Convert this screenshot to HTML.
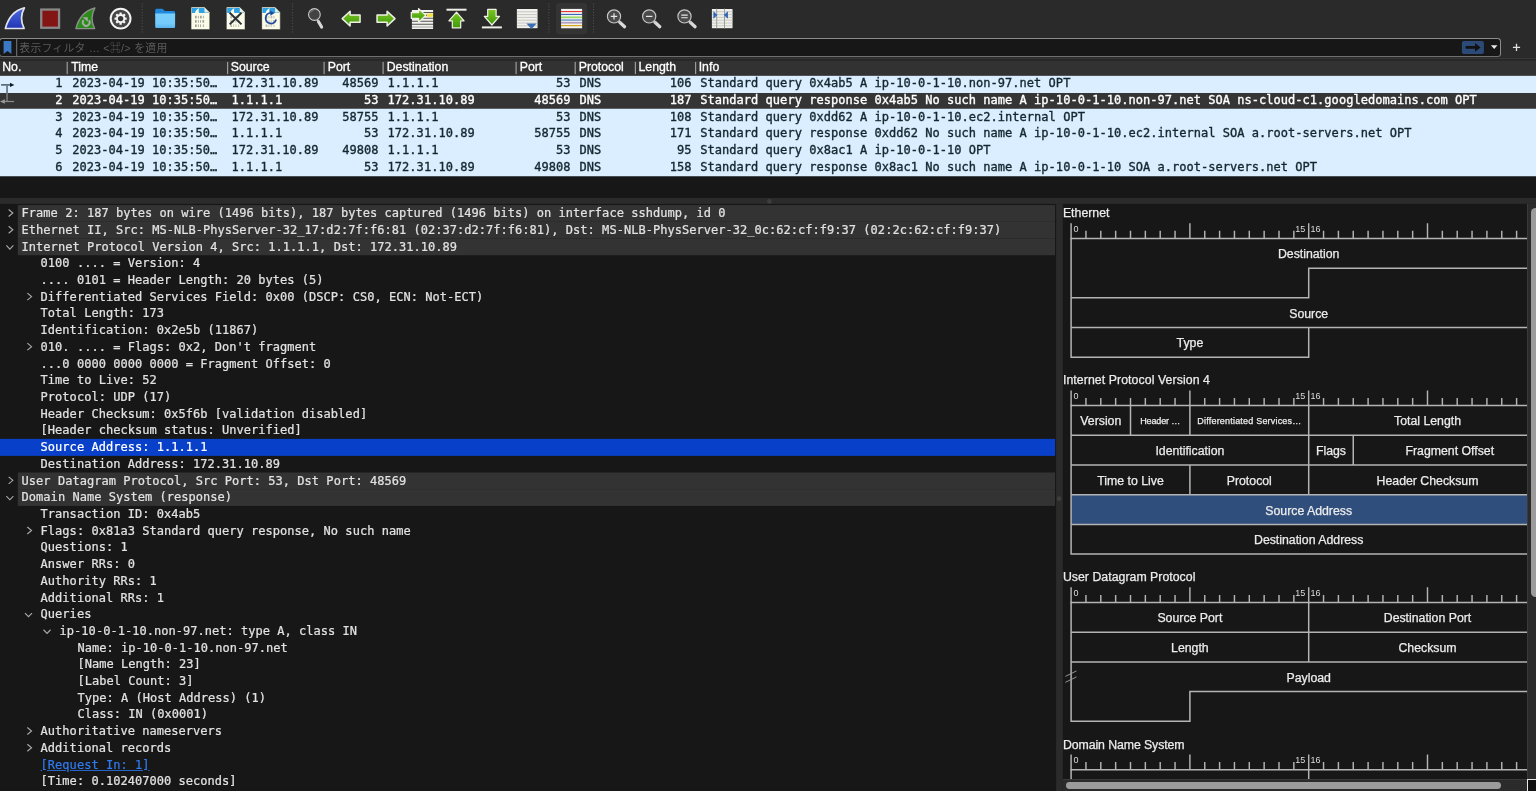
<!DOCTYPE html>
<html lang="ja"><head><meta charset="utf-8"><title>Wireshark</title><style>
*{box-sizing:border-box}
html,body{margin:0;padding:0}
body{width:1536px;height:791px;overflow:hidden;background:#171717;position:relative;font-family:"Liberation Sans","Noto Sans CJK JP",sans-serif;font-size:12px;color:#e4e4e4}
#all{position:absolute;left:0;top:0;width:1536px;height:791px;will-change:transform}
#tb{position:absolute;left:0;top:0;width:1536px;height:38px;background:#2a2a2a}
#fb{position:absolute;left:0;top:38px;width:1536px;height:23px;background:#2a2a2a}
#fin{position:absolute;left:-0.9px;top:0;width:1502.3px;height:18.7px;border:1.1px solid #8c8c8c;border-bottom-color:#707070;border-radius:3.5px;background:#171717}
#ph{position:absolute;left:19.3px;top:2px;font-size:10.8px;letter-spacing:0.3px;line-height:17px;color:#5a5a5a;white-space:pre}
#hd{position:absolute;left:0;top:60px;width:1536px;height:16px;color:#fff;font-size:12.3px}
#hd span{-webkit-text-stroke:0.3px #fff;position:absolute;top:-1px;margin-left:-0.8px;line-height:17px;white-space:pre}
#hd i{position:absolute;top:2px;width:1px;height:12px;background:#9a9a9a}
.pr{position:absolute;left:0;width:1536px;height:17px;color:#12272e;font-family:"DejaVu Sans Mono","Liberation Mono",monospace;font-size:12px;letter-spacing:0.032px}
.pr.sel{color:#fff}
.pr span{-webkit-text-stroke:0.35px currentColor;position:absolute;top:0;line-height:17px;white-space:pre}
.pr span.r{text-align:right}
#tree{position:absolute;left:0;top:0;width:1055px;height:791px;overflow:hidden;font-family:"DejaVu Sans Mono","Liberation Mono",monospace;font-size:12px;letter-spacing:0.032px;color:#e2e2e2}
.tr{position:absolute;left:0;width:1055px;height:17px}
.bg{position:absolute;left:17.8px;width:1037.2px;background:#333333}
.bgs{position:absolute;left:0;width:1055px;background:#0840c9}
.tr.sel span{color:#fff}
.tr span{-webkit-text-stroke:0.22px currentColor;position:absolute;top:0;line-height:17px;white-space:pre;font-weight:normal}
.tr svg{position:absolute;top:0}
.lnk{color:#2f7bf0;text-decoration:underline;text-underline-offset:0.9px;text-decoration-thickness:0.8px;text-decoration-color:#2566c8}
#dg{position:absolute;left:1063px;top:204px;width:464px;height:575px;overflow:hidden;background:#171717}
</style></head><body>
<div id="all">
<div id="tb"><svg width="1536" height="38" viewBox="0 0 1536 38" style="position:absolute;left:0;top:0">
<defs>
<linearGradient id="gb" x1="0" y1="0" x2="0" y2="1"><stop offset="0" stop-color="#4a6be0"/><stop offset="1" stop-color="#2234b4"/></linearGradient>
<linearGradient id="gg" x1="0" y1="0" x2="0" y2="1"><stop offset="0" stop-color="#7ac522"/><stop offset="1" stop-color="#3f9a08"/></linearGradient>
<linearGradient id="gf" x1="0" y1="0" x2="0" y2="1"><stop offset="0" stop-color="#7ad0fc"/><stop offset="0.7" stop-color="#74cbfa"/><stop offset="1" stop-color="#58b4ee"/></linearGradient>
<linearGradient id="gh" x1="0" y1="0" x2="1" y2="1"><stop offset="0" stop-color="#f4f4f4"/><stop offset="1" stop-color="#c4c4c4"/></linearGradient>
</defs>
<!-- start capture (blue fin) -->
<path d="M5.4 28.5C8 18.4 14.4 10.4 24.4 7.9C20.8 14.4 20.8 22 24.1 28.5Z" fill="url(#gb)" stroke="#e2e2ea" stroke-width="1.7" stroke-linejoin="round"/>
<!-- stop (red square) -->
<rect x="41.25" y="9.55" width="17.8" height="18.2" fill="#841515" stroke="#888888" stroke-width="2.3"/>
<!-- restart (green fin) -->
<path d="M75.9 28.6C78.5 18.5 84.9 10.5 94.9 8C91.3 14.5 91.3 22.1 94.6 28.6Z" fill="#2a8c18" stroke="#8e8e8e" stroke-width="1.4" stroke-linejoin="round"/>
<path d="M88.9 20.3a3.4 3.4 0 1 1-5.2 -0.2" fill="none" stroke="#a6aaa6" stroke-width="1.9"/>
<path d="M82.6 17.3h5.2v4.4z" fill="#a6aaa6"/>
<!-- options (gear) -->
<circle cx="120.6" cy="18.6" r="9.9" fill="#474747" stroke="#f4f4f4" stroke-width="2"/>
<g transform="translate(120.6 18.6)" fill="#f4f4f4">
<circle r="4.6"/>
<rect x="-1.15" y="-6.1" width="2.3" height="2.6" rx="0.5"/>
<rect transform="rotate(45)" x="-1.15" y="-6.1" width="2.3" height="2.6" rx="0.5"/><rect transform="rotate(90)" x="-1.15" y="-6.1" width="2.3" height="2.6" rx="0.5"/><rect transform="rotate(135)" x="-1.15" y="-6.1" width="2.3" height="2.6" rx="0.5"/><rect transform="rotate(180)" x="-1.15" y="-6.1" width="2.3" height="2.6" rx="0.5"/><rect transform="rotate(225)" x="-1.15" y="-6.1" width="2.3" height="2.6" rx="0.5"/><rect transform="rotate(270)" x="-1.15" y="-6.1" width="2.3" height="2.6" rx="0.5"/><rect transform="rotate(315)" x="-1.15" y="-6.1" width="2.3" height="2.6" rx="0.5"/>
<circle r="2.7" fill="#383838"/>
</g>
<!-- separators -->
<g fill="#5a5a5a">
<path d="M142.2 3.5v30" stroke="#555" stroke-width="1" stroke-dasharray="1 1.8" fill="none"/>
<path d="M292.6 3.5v30" stroke="#555" stroke-width="1" stroke-dasharray="1 1.8" fill="none"/>
<path d="M548.9 3.5v30" stroke="#555" stroke-width="1" stroke-dasharray="1 1.8" fill="none"/>
<path d="M593.5 3.5v30" stroke="#555" stroke-width="1" stroke-dasharray="1 1.8" fill="none"/>
</g>
<!-- open folder -->
<path d="M155.2 10.4c0-1 0.7-1.6 1.6-1.6h5c0.8 0 1.3 0.3 1.8 0.9l1.1 1.3h8.8c1 0 1.6 0.7 1.6 1.6v3h-19.9z" fill="#2189dc"/>
<path d="M155.2 13.6h19.9v12.8c0 1-0.7 1.6-1.6 1.6h-16.7c-1 0-1.6-0.7-1.6-1.6z" fill="url(#gf)"/>
<!-- save / close / reload docs -->
<g transform="translate(191.2 7.2)"><g><path d="M0 0h13.4l5.1 5.1v17.3h-18.5z" fill="#a8a698"/>
<path d="M0.4 0.4h12.8l4.7 4.7v16.8h-17.5z" fill="#fafbe9"/>
<path d="M0.6 0.7h12.5l4.6 4.6v0.5h-17.1z" fill="#2fa2e4"/>
<path d="M3.6 6.4c0.6-2.6 2-4.4 4.4-5.6c-0.8 1.8-0.7 3.6 0.1 5.2z" fill="#fafbe9"/>
<path d="M13.3 0.6v4.6h4.5z" fill="#eceee0"/></g><g fill="#a2a298"><rect x="3.8" y="8.6" width="1.7" height="2.6"/><rect x="6.7" y="8.6" width="0.9" height="2.6"/><rect x="8.8" y="8.6" width="1.7" height="2.6"/><rect x="11.7" y="8.6" width="0.9" height="2.6"/>
<rect x="3.8" y="12.9" width="1.7" height="2.6"/><rect x="6.7" y="12.9" width="0.9" height="2.6"/><rect x="8.9" y="12.9" width="0.9" height="2.6"/><rect x="11.2" y="12.9" width="1.7" height="2.6"/>
<rect x="3.8" y="17.2" width="1.7" height="2.6"/><rect x="6.7" y="17.2" width="0.9" height="2.6"/><rect x="8.9" y="17.2" width="0.9" height="2.6"/><rect x="11.7" y="17.2" width="0.9" height="2.6"/></g></g>
<g transform="translate(226.5 7.2)"><g><path d="M0 0h13.4l5.1 5.1v17.3h-18.5z" fill="#a8a698"/>
<path d="M0.4 0.4h12.8l4.7 4.7v16.8h-17.5z" fill="#fafbe9"/>
<path d="M0.6 0.7h12.5l4.6 4.6v0.5h-17.1z" fill="#2fa2e4"/>
<path d="M3.6 6.4c0.6-2.6 2-4.4 4.4-5.6c-0.8 1.8-0.7 3.6 0.1 5.2z" fill="#fafbe9"/>
<path d="M13.3 0.6v4.6h4.5z" fill="#eceee0"/></g><g fill="#a2a298" opacity="0.7"><rect x="3.8" y="8.6" width="1.7" height="2.6"/><rect x="6.7" y="8.6" width="0.9" height="2.6"/><rect x="8.8" y="8.6" width="1.7" height="2.6"/><rect x="11.7" y="8.6" width="0.9" height="2.6"/>
<rect x="3.8" y="12.9" width="1.7" height="2.6"/><rect x="6.7" y="12.9" width="0.9" height="2.6"/><rect x="8.9" y="12.9" width="0.9" height="2.6"/><rect x="11.2" y="12.9" width="1.7" height="2.6"/>
<rect x="3.8" y="17.2" width="1.7" height="2.6"/><rect x="6.7" y="17.2" width="0.9" height="2.6"/><rect x="8.9" y="17.2" width="0.9" height="2.6"/><rect x="11.7" y="17.2" width="0.9" height="2.6"/></g><path d="M3.2 5.6l11.8 11.6M15 5.6l-11.8 11.6" stroke="#2a3036" stroke-width="2" fill="none"/></g>
<g transform="translate(261.8 7.2)"><g><path d="M0 0h13.4l5.1 5.1v17.3h-18.5z" fill="#a8a698"/>
<path d="M0.4 0.4h12.8l4.7 4.7v16.8h-17.5z" fill="#fafbe9"/>
<path d="M0.6 0.7h12.5l4.6 4.6v0.5h-17.1z" fill="#2fa2e4"/>
<path d="M3.6 6.4c0.6-2.6 2-4.4 4.4-5.6c-0.8 1.8-0.7 3.6 0.1 5.2z" fill="#fafbe9"/>
<path d="M13.3 0.6v4.6h4.5z" fill="#eceee0"/></g><g fill="#a2a298" opacity="0.7"><rect x="3.8" y="8.6" width="1.7" height="2.6"/><rect x="6.7" y="8.6" width="0.9" height="2.6"/><rect x="8.8" y="8.6" width="1.7" height="2.6"/><rect x="11.7" y="8.6" width="0.9" height="2.6"/>
<rect x="3.8" y="12.9" width="1.7" height="2.6"/><rect x="6.7" y="12.9" width="0.9" height="2.6"/><rect x="8.9" y="12.9" width="0.9" height="2.6"/><rect x="11.2" y="12.9" width="1.7" height="2.6"/>
<rect x="3.8" y="17.2" width="1.7" height="2.6"/><rect x="6.7" y="17.2" width="0.9" height="2.6"/><rect x="8.9" y="17.2" width="0.9" height="2.6"/><rect x="11.7" y="17.2" width="0.9" height="2.6"/></g><path d="M9.2 5.7a5.3 5.3 0 1 0 5.1 6.6" stroke="#1f4b9c" stroke-width="1.8" fill="none"/><path d="M8.4 3.4l4.4 2.4-4.2 2.8z" fill="#1f4b9c"/></g>
<!-- find -->
<g transform="translate(314.4 14.5)"><path d="M4 7l3.2 5.6" stroke="#dadada" stroke-width="3.1" stroke-linecap="round"/><path d="M2.6 4.8l1.6 2.6" stroke="#c8c8c8" stroke-width="1.6"/><circle r="5.85" fill="#434343" stroke="#c8c8c8" stroke-width="1.1"/><path d="M-3.7 -2a4.2 4.2 0 0 1 3.2-2.4" stroke="#8a8a8a" stroke-width="0.7" fill="none"/></g>
<!-- back / forward -->
<path d="M342.2 18.6l7.9-7.3v3.75h9.95v7.2h-9.95v3.75z" fill="url(#gg)" stroke="#f0f0e6" stroke-width="1.5" stroke-linejoin="round"/>
<path d="M395 18.6l-7.9-7.3v3.75h-10.05v7.2h10.05v3.75z" fill="url(#gg)" stroke="#f0f0e6" stroke-width="1.5" stroke-linejoin="round"/>
<!-- goto -->
<g>
<rect x="411.9" y="10" width="21.2" height="19.1" fill="#55554f"/>
<path d="M411.9 10.95h21.2M411.9 13.9h21.2M411.9 16.85h21.2M411.9 19.8h21.2M411.9 22.75h21.2M411.9 25.7h21.2M411.9 28.15h21.2" stroke="#f1f1ef" stroke-width="1.9" fill="none"/>
<rect x="427" y="13.6" width="6.1" height="3.2" fill="#f6e23c"/>
<path d="M411.3 12.5h7.3v-3.9l7.1 6.8-7.1 6.8v-3.9h-7.3z" fill="url(#gg)" stroke="#f0f0e6" stroke-width="1.3" stroke-linejoin="round"/>
</g>
<!-- first -->
<rect x="446.5" y="8.7" width="20" height="2" fill="#efefe8"/>
<path d="M456.5 12.2l7.6 8.6h-3.4v7h-8.4v-7h-3.4z" fill="url(#gg)" stroke="#f2f2e8" stroke-width="1.2" stroke-linejoin="round"/>
<!-- last -->
<rect x="481.9" y="26.4" width="20" height="2" fill="#efefe8"/>
<path d="M491.9 25l7.6-8.6h-3.4v-7h-8.4v7h-3.4z" fill="url(#gg)" stroke="#f2f2e8" stroke-width="1.2" stroke-linejoin="round"/>
<!-- autoscroll -->
<rect x="516.9" y="9" width="20.6" height="19.2" fill="#f1f1ee"/>
<path d="M516.9 11.8h20.6M516.9 14.6h20.6M516.9 17.4h20.6M516.9 20.2h20.6M516.9 23h20.6M516.9 25.8h20.6" stroke="#c2c2bc" stroke-width="0.9" fill="none"/>
<path d="M526.4 23.4h10.2l-5.1 5.6z" fill="#3a6eb4"/>
<!-- colorize (active) -->
<rect x="556" y="2.9" width="31.2" height="31.4" rx="3.5" fill="#343434"/>
<rect x="561.1" y="8.9" width="21" height="19.4" fill="#f2f2f0"/>
<rect x="561.1" y="11" width="21" height="1.1" fill="#e83434"/>
<rect x="561.1" y="13.9" width="21" height="1.1" fill="#3a68b8"/>
<rect x="561.1" y="16.5" width="21" height="1.7" fill="#96d860"/>
<rect x="561.1" y="19.2" width="21" height="1.9" fill="#88a8d4"/>
<rect x="561.1" y="22.3" width="21" height="1.1" fill="#9a78a6"/>
<rect x="561.1" y="25" width="21" height="1.2" fill="#d8a818"/>
<!-- zoom in/out/reset -->
<g transform="translate(614 16.4)"><path d="M5.7 5.8l4.9 4.5" stroke="#dadada" stroke-width="3.2" stroke-linecap="round"/><path d="M4.4 4.4l2 2" stroke="#c8c8c8" stroke-width="1.8"/><circle r="6.6" fill="#4a4a4a" stroke="#c6c6c6" stroke-width="1.15"/><path d="M-3.2 0h6.4M0 -3.2v6.4" stroke="#e8e8e8" stroke-width="1.2"/></g>
<g transform="translate(649.2 16.4)"><path d="M5.7 5.8l4.9 4.5" stroke="#dadada" stroke-width="3.2" stroke-linecap="round"/><path d="M4.4 4.4l2 2" stroke="#c8c8c8" stroke-width="1.8"/><circle r="6.6" fill="#4a4a4a" stroke="#c6c6c6" stroke-width="1.15"/><path d="M-3.2 0h6.4" stroke="#e8e8e8" stroke-width="1.2"/></g>
<g transform="translate(684.5 16.4)"><path d="M5.7 5.8l4.9 4.5" stroke="#dadada" stroke-width="3.2" stroke-linecap="round"/><path d="M4.4 4.4l2 2" stroke="#c8c8c8" stroke-width="1.8"/><circle r="6.6" fill="#4a4a4a" stroke="#c6c6c6" stroke-width="1.15"/><path d="M-3.2 -1.3h6.4M-3.2 1.3h6.4" stroke="#e8e8e8" stroke-width="1.1"/></g>
<!-- resize columns -->
<rect x="711.9" y="9" width="20.6" height="19.2" fill="#f0f0ec"/>
<path d="M711.9 11.8h20.6M711.9 14.6h20.6M711.9 17.4h20.6M711.9 20.2h20.6M711.9 23h20.6M711.9 25.8h20.6" stroke="#c4c4be" stroke-width="0.9" fill="none"/>
<path d="M716.7 8.6v19.8M724.5 8.6v19.8" stroke="#9c9c98" stroke-width="1" fill="none"/>
<path d="M713.4 11.3l4 3.7-4 3.7zM727.9 11.3l-4 3.7 4 3.7z" fill="#2f66b8"/>
</svg>
</div>
<div id="fb"><div id="fin"></div>
<svg width="1536" height="23" viewBox="0 38 1536 23" style="position:absolute;left:0;top:0">
<path d="M3.6 41.1h7.8v12.9l-3.9-3-3.9 3z" fill="#3b79c4"/>
<rect x="16.2" y="38.6" width="1" height="18" fill="#7a7a7a"/>
<rect x="1461.9" y="41" width="22" height="12.9" rx="2" fill="#2c4a78"/>
<path d="M1465.6 46h9.4v-2.9l5.6 4.3-5.6 4.3v-2.9h-9.4z" fill="#111"/>
<path d="M1490.9 45.2h6.6l-3.3 3.9z" fill="#e8e8e8"/>
<path d="M1512.9 47.4h7.2M1516.5 43.8v7.2" stroke="#e0e0e0" stroke-width="1.3" fill="none"/>
<rect x="0" y="58" width="1536" height="0.9" fill="#3a3a3a"/>
<rect x="0" y="58.9" width="1536" height="1.8" fill="#262626"/>
</svg>
<div id="ph">表示フィルタ … &lt;⌘/&gt; を適用</div></div>
<svg width="1536" height="791" viewBox="0 0 1536 791" style="position:absolute;left:0;top:0"><rect x="0" y="60.7" width="1536" height="15.1" fill="#323232"/><rect x="66.60" y="61.9" width="1.2" height="12.2" fill="#9c9c9c"/><rect x="227.00" y="61.9" width="1.2" height="12.2" fill="#9c9c9c"/><rect x="323.50" y="61.9" width="1.2" height="12.2" fill="#9c9c9c"/><rect x="382.50" y="61.9" width="1.2" height="12.2" fill="#9c9c9c"/><rect x="515.50" y="61.9" width="1.2" height="12.2" fill="#9c9c9c"/><rect x="574.60" y="61.9" width="1.2" height="12.2" fill="#9c9c9c"/><rect x="634.80" y="61.9" width="1.2" height="12.2" fill="#9c9c9c"/><rect x="695.00" y="61.9" width="1.2" height="12.2" fill="#9c9c9c"/><rect x="0" y="75.8" width="1536" height="100.45" fill="#daeeff"/><rect x="0" y="93" width="1536" height="15.75" fill="#353535"/><rect x="0" y="197.9" width="1536" height="6" fill="#2b2b2b"/><circle cx="769.4" cy="201.4" r="2.4" fill="#3e3e3e"/><rect x="1056.1" y="203.9" width="6.7" height="588" fill="#2b2b2b"/><circle cx="1059.1" cy="498.7" r="2.4" fill="#3e3e3e"/><rect x="17.8" y="205.10" width="1037.2" height="16.73" fill="#333333"/><rect x="17.8" y="221.81" width="1037.2" height="16.73" fill="#333333"/><rect x="17.8" y="238.52" width="1037.2" height="16.73" fill="#333333"/><rect x="0" y="438.89" width="1055.1" height="17" fill="#0840c9"/><rect x="17.8" y="472.46" width="1037.2" height="16.73" fill="#333333"/><rect x="17.8" y="489.17" width="1037.2" height="16.73" fill="#333333"/></svg>
<div id="hd"><span style="left:3px">No.</span><span style="left:72px">Time</span><span style="left:231.5px">Source</span><span style="left:328.5px">Port</span><span style="left:387.5px">Destination</span><span style="left:520.5px">Port</span><span style="left:579.5px">Protocol</span><span style="left:639.3px">Length</span><span style="left:699.5px">Info</span></div>
<div class="pr" style="top:75px"><span class="r" style="right:1473.4px">1</span><span style="left:72.2px">2023-04-19 10:35:50…</span><span style="left:231.5px">172.31.10.89</span><span class="r" style="right:1157.4px">48569</span><span style="left:387.6px">1.1.1.1</span><span class="r" style="right:965.4px">53</span><span style="left:579.6px">DNS</span><span class="r" style="right:844.6px">106</span><span style="left:700.3px">Standard query 0x4ab5 A ip-10-0-1-10.non-97.net OPT</span></div>
<div class="pr sel" style="top:92px"><span class="r" style="right:1473.4px">2</span><span style="left:72.2px">2023-04-19 10:35:50…</span><span style="left:231.5px">1.1.1.1</span><span class="r" style="right:1157.4px">53</span><span style="left:387.6px">172.31.10.89</span><span class="r" style="right:965.4px">48569</span><span style="left:579.6px">DNS</span><span class="r" style="right:844.6px">187</span><span style="left:700.3px">Standard query response 0x4ab5 No such name A ip-10-0-1-10.non-97.net SOA ns-cloud-c1.googledomains.com OPT</span></div>
<div class="pr" style="top:109px"><span class="r" style="right:1473.4px">3</span><span style="left:72.2px">2023-04-19 10:35:50…</span><span style="left:231.5px">172.31.10.89</span><span class="r" style="right:1157.4px">58755</span><span style="left:387.6px">1.1.1.1</span><span class="r" style="right:965.4px">53</span><span style="left:579.6px">DNS</span><span class="r" style="right:844.6px">108</span><span style="left:700.3px">Standard query 0xdd62 A ip-10-0-1-10.ec2.internal OPT</span></div>
<div class="pr" style="top:125px"><span class="r" style="right:1473.4px">4</span><span style="left:72.2px">2023-04-19 10:35:50…</span><span style="left:231.5px">1.1.1.1</span><span class="r" style="right:1157.4px">53</span><span style="left:387.6px">172.31.10.89</span><span class="r" style="right:965.4px">58755</span><span style="left:579.6px">DNS</span><span class="r" style="right:844.6px">171</span><span style="left:700.3px">Standard query response 0xdd62 No such name A ip-10-0-1-10.ec2.internal SOA a.root-servers.net OPT</span></div>
<div class="pr" style="top:142px"><span class="r" style="right:1473.4px">5</span><span style="left:72.2px">2023-04-19 10:35:50…</span><span style="left:231.5px">172.31.10.89</span><span class="r" style="right:1157.4px">49808</span><span style="left:387.6px">1.1.1.1</span><span class="r" style="right:965.4px">53</span><span style="left:579.6px">DNS</span><span class="r" style="right:844.6px">95</span><span style="left:700.3px">Standard query 0x8ac1 A ip-10-0-1-10 OPT</span></div>
<div class="pr" style="top:159px"><span class="r" style="right:1473.4px">6</span><span style="left:72.2px">2023-04-19 10:35:50…</span><span style="left:231.5px">1.1.1.1</span><span class="r" style="right:1157.4px">53</span><span style="left:387.6px">172.31.10.89</span><span class="r" style="right:965.4px">49808</span><span style="left:579.6px">DNS</span><span class="r" style="right:844.6px">158</span><span style="left:700.3px">Standard query response 0x8ac1 No such name A ip-10-0-1-10 SOA a.root-servers.net OPT</span></div>
<svg width="20" height="34" viewBox="0 75 20 34" style="position:absolute;left:0;top:75px">
<path d="M1.1 84.9h9.6" stroke="#4e606a" stroke-width="1.6" fill="none"/>
<path d="M7.05 85.4v7.6" stroke="#657681" stroke-width="1.7" fill="none"/>
<path d="M10 82.8l4.4 2.1-4.4 2.1z" fill="#0f1f26"/>
<path d="M7.05 93v8.2" stroke="#747474" stroke-width="1.7" fill="none"/>
<path d="M3.5 101.5h10.6" stroke="#8c8c8c" stroke-width="1.2" fill="none"/>
<path d="M4.8 99.2l-4.8 2.3 4.8 2.3z" fill="#9a9a9a"/>
</svg>
<div id="tree">
<div class="tr" style="top:205px"><svg width="11" height="17" viewBox="-5.65 -8.00 11 17" style="left:5px"><path d="M-2 -3.5L2.2 0 -2 3.5" stroke="#ababab" stroke-width="1.1" fill="none"/></svg><span style="left:21.6px">Frame 2: 187 bytes on wire (1496 bits), 187 bytes captured (1496 bits) on interface sshdump, id 0</span></div>
<div class="tr" style="top:222px"><svg width="11" height="17" viewBox="-5.65 -7.71 11 17" style="left:5px"><path d="M-2 -3.5L2.2 0 -2 3.5" stroke="#ababab" stroke-width="1.1" fill="none"/></svg><span style="left:21.6px">Ethernet II, Src: MS-NLB-PhysServer-32_17:d2:7f:f6:81 (02:37:d2:7f:f6:81), Dst: MS-NLB-PhysServer-32_0c:62:cf:f9:37 (02:2c:62:cf:f9:37)</span></div>
<div class="tr" style="top:239px"><svg width="11" height="17" viewBox="-5.85 -8.32 11 17" style="left:4px"><path d="M-3.5 -1.9L0 1.8 3.5 -1.9" stroke="#ababab" stroke-width="1.1" fill="none"/></svg><span style="left:21.6px">Internet Protocol Version 4, Src: 1.1.1.1, Dst: 172.31.10.89</span></div>
<div class="tr" style="top:255px"><span style="left:40.6px">0100 .... = Version: 4</span></div>
<div class="tr" style="top:272px"><span style="left:40.6px">.... 0101 = Header Length: 20 bytes (5)</span></div>
<div class="tr" style="top:289px"><svg width="11" height="17" viewBox="-5.35 -7.55 11 17" style="left:24px"><path d="M-2 -3.5L2.2 0 -2 3.5" stroke="#ababab" stroke-width="1.1" fill="none"/></svg><span style="left:40.6px">Differentiated Services Field: 0x00 (DSCP: CS0, ECN: Not-ECT)</span></div>
<div class="tr" style="top:305px"><span style="left:40.6px">Total Length: 173</span></div>
<div class="tr" style="top:322px"><span style="left:40.6px">Identification: 0x2e5b (11867)</span></div>
<div class="tr" style="top:339px"><svg width="11" height="17" viewBox="-5.35 -7.68 11 17" style="left:24px"><path d="M-2 -3.5L2.2 0 -2 3.5" stroke="#ababab" stroke-width="1.1" fill="none"/></svg><span style="left:40.6px">010. .... = Flags: 0x2, Don't fragment</span></div>
<div class="tr" style="top:356px"><span style="left:40.6px">...0 0000 0000 0000 = Fragment Offset: 0</span></div>
<div class="tr" style="top:372px"><span style="left:40.6px">Time to Live: 52</span></div>
<div class="tr" style="top:389px"><span style="left:40.6px">Protocol: UDP (17)</span></div>
<div class="tr" style="top:406px"><span style="left:40.6px">Header Checksum: 0x5f6b [validation disabled]</span></div>
<div class="tr" style="top:422px"><span style="left:40.6px">[Header checksum status: Unverified]</span></div>
<div class="tr sel" style="top:439px"><span style="left:40.6px">Source Address: 1.1.1.1</span></div>
<div class="tr" style="top:456px"><span style="left:40.6px">Destination Address: 172.31.10.89</span></div>
<div class="tr" style="top:473px"><svg width="11" height="17" viewBox="-5.65 -7.36 11 17" style="left:5px"><path d="M-2 -3.5L2.2 0 -2 3.5" stroke="#ababab" stroke-width="1.1" fill="none"/></svg><span style="left:21.6px">User Datagram Protocol, Src Port: 53, Dst Port: 48569</span></div>
<div class="tr" style="top:489px"><svg width="11" height="17" viewBox="-5.85 -8.97 11 17" style="left:4px"><path d="M-3.5 -1.9L0 1.8 3.5 -1.9" stroke="#ababab" stroke-width="1.1" fill="none"/></svg><span style="left:21.6px">Domain Name System (response)</span></div>
<div class="tr" style="top:506px"><span style="left:40.6px">Transaction ID: 0x4ab5</span></div>
<div class="tr" style="top:523px"><svg width="11" height="17" viewBox="-5.35 -7.49 11 17" style="left:24px"><path d="M-2 -3.5L2.2 0 -2 3.5" stroke="#ababab" stroke-width="1.1" fill="none"/></svg><span style="left:40.6px">Flags: 0x81a3 Standard query response, No such name</span></div>
<div class="tr" style="top:539px"><span style="left:40.6px">Questions: 1</span></div>
<div class="tr" style="top:556px"><span style="left:40.6px">Answer RRs: 0</span></div>
<div class="tr" style="top:573px"><span style="left:40.6px">Authority RRs: 1</span></div>
<div class="tr" style="top:590px"><span style="left:40.6px">Additional RRs: 1</span></div>
<div class="tr" style="top:606px"><svg width="11" height="17" viewBox="-5.50 -8.94 11 17" style="left:23px"><path d="M-3.5 -1.9L0 1.8 3.5 -1.9" stroke="#ababab" stroke-width="1.1" fill="none"/></svg><span style="left:40.6px">Queries</span></div>
<div class="tr" style="top:623px"><svg width="11" height="17" viewBox="-5.05 -8.65 11 17" style="left:42px"><path d="M-3.5 -1.9L0 1.8 3.5 -1.9" stroke="#ababab" stroke-width="1.1" fill="none"/></svg><span style="left:59.6px">ip-10-0-1-10.non-97.net: type A, class IN</span></div>
<div class="tr" style="top:640px"><span style="left:77.4px">Name: ip-10-0-1-10.non-97.net</span></div>
<div class="tr" style="top:656px"><span style="left:77.4px">[Name Length: 23]</span></div>
<div class="tr" style="top:673px"><span style="left:77.4px">[Label Count: 3]</span></div>
<div class="tr" style="top:690px"><span style="left:77.4px">Type: A (Host Address) (1)</span></div>
<div class="tr" style="top:706px"><span style="left:77.4px">Class: IN (0x0001)</span></div>
<div class="tr" style="top:723px"><svg width="11" height="17" viewBox="-5.35 -8.01 11 17" style="left:24px"><path d="M-2 -3.5L2.2 0 -2 3.5" stroke="#ababab" stroke-width="1.1" fill="none"/></svg><span style="left:40.6px">Authoritative nameservers</span></div>
<div class="tr" style="top:740px"><svg width="11" height="17" viewBox="-5.35 -7.72 11 17" style="left:24px"><path d="M-2 -3.5L2.2 0 -2 3.5" stroke="#ababab" stroke-width="1.1" fill="none"/></svg><span style="left:40.6px">Additional records</span></div>
<div class="tr" style="top:757px"><span class="lnk" style="left:40.6px">[Request In: 1]</span></div>
<div class="tr" style="top:773px"><span style="left:40.6px">[Time: 0.102407000 seconds]</span></div>
</div>
<div id="dg"><svg width="464" height="575" viewBox="0 0 464 575" style="position:absolute;left:0;top:0;font-family:"Liberation Sans","Noto Sans CJK JP",sans-serif" shape-rendering="auto">
<text x="-0.1" y="13.30" font-size="12.3" textLength="46.6" fill="#ececec" stroke="#ececec" stroke-width="0.25">Ethernet</text>
<path d="M8.10 19.25V34.45" stroke="#b4b4b4" stroke-width="1.45"/><path d="M22.95 26.85V34.45M37.80 26.85V34.45M52.65 26.85V34.45M67.50 26.85V34.45M82.35 26.85V34.45M97.20 26.85V34.45M112.05 26.85V34.45M126.90 19.25V34.45M141.75 26.85V34.45M156.60 26.85V34.45M171.45 26.85V34.45M186.30 26.85V34.45M201.15 26.85V34.45M216.00 26.85V34.45M230.85 26.85V34.45M245.70 19.25V34.45M260.55 26.85V34.45M275.40 26.85V34.45M290.25 26.85V34.45M305.10 26.85V34.45M319.95 26.85V34.45M334.80 26.85V34.45M349.65 26.85V34.45M364.50 19.25V34.45M379.35 26.85V34.45M394.20 26.85V34.45M409.05 26.85V34.45M423.90 26.85V34.45M438.75 26.85V34.45M453.60 26.85V34.45M468.45 26.85V34.45M483.30 19.25V34.45" stroke="#b4b4b4" stroke-width="1.45" fill="none"/><path d="M7.40 34.45H470" stroke="#b4b4b4" stroke-width="1.5"/><text x="10.50" y="28.15" font-size="9" fill="#dcdcdc">0</text><text x="242.30" y="28.15" font-size="9" fill="#dcdcdc" text-anchor="end">15</text><text x="247.60" y="28.15" font-size="9" fill="#dcdcdc">16</text>
<path d="M8.10 34.45V153.25H245.70V123.55" stroke="#b4b4b4" stroke-width="1.5" fill="none"/>
<path d="M8.10 93.85H245.70V64.15H470" stroke="#b4b4b4" stroke-width="1.5" fill="none"/>
<path d="M8.10 123.55H470" stroke="#b4b4b4" stroke-width="1.5" fill="none"/>
<text x="245.70" y="54.30" font-size="12.3" fill="#ececec" stroke="#ececec" stroke-width="0.25" text-anchor="middle">Destination</text>
<text x="245.70" y="113.70" font-size="12.3" fill="#ececec" stroke="#ececec" stroke-width="0.25" text-anchor="middle">Source</text>
<text x="126.90" y="143.40" font-size="12.3" fill="#ececec" stroke="#ececec" stroke-width="0.25" text-anchor="middle">Type</text>
<text x="-0.1" y="180.45" font-size="12.3" textLength="147" fill="#ececec" stroke="#ececec" stroke-width="0.25">Internet Protocol Version 4</text>
<path d="M8.10 186.40V201.60" stroke="#b4b4b4" stroke-width="1.45"/><path d="M22.95 194.00V201.60M37.80 194.00V201.60M52.65 194.00V201.60M67.50 194.00V201.60M82.35 194.00V201.60M97.20 194.00V201.60M112.05 194.00V201.60M126.90 186.40V201.60M141.75 194.00V201.60M156.60 194.00V201.60M171.45 194.00V201.60M186.30 194.00V201.60M201.15 194.00V201.60M216.00 194.00V201.60M230.85 194.00V201.60M245.70 186.40V201.60M260.55 194.00V201.60M275.40 194.00V201.60M290.25 194.00V201.60M305.10 194.00V201.60M319.95 194.00V201.60M334.80 194.00V201.60M349.65 194.00V201.60M364.50 186.40V201.60M379.35 194.00V201.60M394.20 194.00V201.60M409.05 194.00V201.60M423.90 194.00V201.60M438.75 194.00V201.60M453.60 194.00V201.60M468.45 194.00V201.60M483.30 186.40V201.60" stroke="#b4b4b4" stroke-width="1.45" fill="none"/><path d="M7.40 201.60H470" stroke="#b4b4b4" stroke-width="1.5"/><text x="10.50" y="195.30" font-size="9" fill="#dcdcdc">0</text><text x="242.30" y="195.30" font-size="9" fill="#dcdcdc" text-anchor="end">15</text><text x="247.60" y="195.30" font-size="9" fill="#dcdcdc">16</text>
<rect x="8.10" y="290.70" width="470" height="29.70" fill="#304e7c"/>
<path d="M8.10 201.60V350.10H470" stroke="#b4b4b4" stroke-width="1.5" fill="none"/>
<path d="M8.10 231.30H470" stroke="#b4b4b4" stroke-width="1.5" fill="none"/>
<path d="M8.10 261.00H470" stroke="#b4b4b4" stroke-width="1.5" fill="none"/>
<path d="M8.10 290.70H470" stroke="#b4b4b4" stroke-width="1.5" fill="none"/>
<path d="M8.10 320.40H470" stroke="#b4b4b4" stroke-width="1.5" fill="none"/>
<path d="M67.50 201.60V231.30M126.90 201.60V231.30M245.70 201.60V290.70M290.25 231.30V261.00M126.90 261.00V290.70" stroke="#b4b4b4" stroke-width="1.5" fill="none"/>
<text x="37.80" y="221.45" font-size="12.3" fill="#ececec" stroke="#ececec" stroke-width="0.25" text-anchor="middle">Version</text>
<text x="97.20" y="219.85" font-size="9" fill="#ececec" stroke="#ececec" stroke-width="0.25" text-anchor="middle" textLength="40">Header …</text>
<text x="186.30" y="219.85" font-size="9" fill="#ececec" stroke="#ececec" stroke-width="0.25" text-anchor="middle" textLength="103.9">Differentiated Services…</text>
<text x="364.50" y="221.45" font-size="12.3" fill="#ececec" stroke="#ececec" stroke-width="0.25" text-anchor="middle">Total Length</text>
<text x="126.90" y="251.15" font-size="12.3" fill="#ececec" stroke="#ececec" stroke-width="0.25" text-anchor="middle">Identification</text>
<text x="267.97" y="251.15" font-size="12.3" fill="#ececec" stroke="#ececec" stroke-width="0.25" text-anchor="middle">Flags</text>
<text x="386.77" y="251.15" font-size="12.3" fill="#ececec" stroke="#ececec" stroke-width="0.25" text-anchor="middle">Fragment Offset</text>
<text x="67.50" y="280.85" font-size="12.3" fill="#ececec" stroke="#ececec" stroke-width="0.25" text-anchor="middle">Time to Live</text>
<text x="186.30" y="280.85" font-size="12.3" fill="#ececec" stroke="#ececec" stroke-width="0.25" text-anchor="middle">Protocol</text>
<text x="364.50" y="280.85" font-size="12.3" fill="#ececec" stroke="#ececec" stroke-width="0.25" text-anchor="middle">Header Checksum</text>
<text x="245.70" y="310.55" font-size="12.3" fill="#ececec" stroke="#ececec" stroke-width="0.25" text-anchor="middle">Source Address</text>
<text x="245.70" y="340.25" font-size="12.3" fill="#ececec" stroke="#ececec" stroke-width="0.25" text-anchor="middle">Destination Address</text>
<text x="-0.1" y="377.35" font-size="12.3" textLength="132.5" fill="#ececec" stroke="#ececec" stroke-width="0.25">User Datagram Protocol</text>
<path d="M8.10 383.30V398.50" stroke="#b4b4b4" stroke-width="1.45"/><path d="M22.95 390.90V398.50M37.80 390.90V398.50M52.65 390.90V398.50M67.50 390.90V398.50M82.35 390.90V398.50M97.20 390.90V398.50M112.05 390.90V398.50M126.90 383.30V398.50M141.75 390.90V398.50M156.60 390.90V398.50M171.45 390.90V398.50M186.30 390.90V398.50M201.15 390.90V398.50M216.00 390.90V398.50M230.85 390.90V398.50M245.70 383.30V398.50M260.55 390.90V398.50M275.40 390.90V398.50M290.25 390.90V398.50M305.10 390.90V398.50M319.95 390.90V398.50M334.80 390.90V398.50M349.65 390.90V398.50M364.50 383.30V398.50M379.35 390.90V398.50M394.20 390.90V398.50M409.05 390.90V398.50M423.90 390.90V398.50M438.75 390.90V398.50M453.60 390.90V398.50M468.45 390.90V398.50M483.30 383.30V398.50" stroke="#b4b4b4" stroke-width="1.45" fill="none"/><path d="M7.40 398.50H470" stroke="#b4b4b4" stroke-width="1.5"/><text x="10.50" y="392.20" font-size="9" fill="#dcdcdc">0</text><text x="242.30" y="392.20" font-size="9" fill="#dcdcdc" text-anchor="end">15</text><text x="247.60" y="392.20" font-size="9" fill="#dcdcdc">16</text>
<path d="M8.10 398.50V517.30H126.90V487.60H470" stroke="#b4b4b4" stroke-width="1.5" fill="none"/>
<path d="M8.10 428.20H470" stroke="#b4b4b4" stroke-width="1.5" fill="none"/>
<path d="M8.10 457.90H470" stroke="#b4b4b4" stroke-width="1.5" fill="none"/>
<path d="M245.70 398.50V457.90" stroke="#b4b4b4" stroke-width="1.5" fill="none"/>
<text x="126.90" y="418.35" font-size="12.3" fill="#ececec" stroke="#ececec" stroke-width="0.25" text-anchor="middle">Source Port</text>
<text x="364.50" y="418.35" font-size="12.3" fill="#ececec" stroke="#ececec" stroke-width="0.25" text-anchor="middle">Destination Port</text>
<text x="126.90" y="448.05" font-size="12.3" fill="#ececec" stroke="#ececec" stroke-width="0.25" text-anchor="middle">Length</text>
<text x="364.50" y="448.05" font-size="12.3" fill="#ececec" stroke="#ececec" stroke-width="0.25" text-anchor="middle">Checksum</text>
<text x="245.70" y="477.75" font-size="12.3" fill="#ececec" stroke="#ececec" stroke-width="0.25" text-anchor="middle">Payload</text>
<path d="M2.40 472.40l11.1 -5.5M2.40 478.30l11.1 -5.4" stroke="#a0a0a0" stroke-width="0.9" fill="none"/>
<text x="-0.1" y="544.55" font-size="12.3" textLength="121.7" fill="#ececec" stroke="#ececec" stroke-width="0.25">Domain Name System</text>
<path d="M8.10 550.50V565.70" stroke="#b4b4b4" stroke-width="1.45"/><path d="M22.95 558.10V565.70M37.80 558.10V565.70M52.65 558.10V565.70M67.50 558.10V565.70M82.35 558.10V565.70M97.20 558.10V565.70M112.05 558.10V565.70M126.90 550.50V565.70M141.75 558.10V565.70M156.60 558.10V565.70M171.45 558.10V565.70M186.30 558.10V565.70M201.15 558.10V565.70M216.00 558.10V565.70M230.85 558.10V565.70M245.70 550.50V565.70M260.55 558.10V565.70M275.40 558.10V565.70M290.25 558.10V565.70M305.10 558.10V565.70M319.95 558.10V565.70M334.80 558.10V565.70M349.65 558.10V565.70M364.50 550.50V565.70M379.35 558.10V565.70M394.20 558.10V565.70M409.05 558.10V565.70M423.90 558.10V565.70M438.75 558.10V565.70M453.60 558.10V565.70M468.45 558.10V565.70M483.30 550.50V565.70" stroke="#b4b4b4" stroke-width="1.45" fill="none"/><path d="M7.40 565.70H470" stroke="#b4b4b4" stroke-width="1.5"/><text x="10.50" y="559.40" font-size="9" fill="#dcdcdc">0</text><text x="242.30" y="559.40" font-size="9" fill="#dcdcdc" text-anchor="end">15</text><text x="247.60" y="559.40" font-size="9" fill="#dcdcdc">16</text>
<path d="M8.10 565.70V600M245.70 565.70V600" stroke="#b4b4b4" stroke-width="1.5" fill="none"/>
</svg></div>
<div style="position:absolute;left:1527.3px;top:204.4px;width:9px;height:574.4px;background:#2b2b2b;border-left:1px solid #3a3a3a"></div>
<div style="position:absolute;left:1531.2px;top:208.2px;width:9px;height:388.5px;border-radius:4.5px;background:#9c9c9c"></div>
<div style="position:absolute;left:1062.7px;top:778.8px;width:464.6px;height:12.2px;background:#2b2b2b;border-top:1px solid #3a3a3a"></div>
<div style="position:absolute;left:1065.8px;top:781.9px;width:435.2px;height:6.8px;border-radius:3.4px;background:#9c9c9c"></div>
<div style="position:absolute;left:1527.3px;top:778.8px;width:9px;height:12.2px;background:#111;border-left:1px solid #e8e8e8;border-top:1px solid #e8e8e8"></div>
</div></body></html>
